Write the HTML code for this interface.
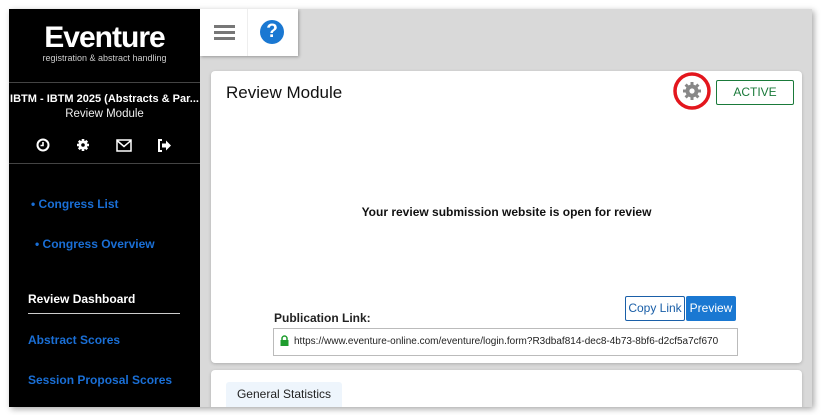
<!DOCTYPE html>
<html><head><meta charset="utf-8"><style>
*{margin:0;padding:0;box-sizing:border-box}
body{width:821px;height:415px;background:#fff;font-family:"Liberation Sans",sans-serif;position:relative;overflow:hidden}
#screen{position:absolute;left:9px;top:9px;width:803px;height:398px;background:#d9d9d9;box-shadow:2px 2px 6px rgba(0,0,0,.35);overflow:hidden}
#side{position:absolute;left:0;top:0;width:191px;height:398px;background:#000;color:#fff}
.abs{position:absolute}
.card{position:absolute;background:#fff;border-radius:4px;box-shadow:0 1px 3px rgba(0,0,0,.2)}
.link{color:#1a6fd6;font-weight:bold;font-size:12px}
</style></head><body>
<div id="screen">
 <div id="side">
  <div class="abs" style="left:0;width:191px;top:13px;text-align:center;font-size:30px;line-height:32px;font-weight:bold;letter-spacing:-1px">Eventure</div>
  <div class="abs" style="left:0;width:191px;top:44px;text-align:center;font-size:9px;color:#ccc">registration &amp; abstract handling</div>
  <div class="abs" style="left:0;top:73px;width:191px;height:1px;background:#444"></div>
  <div class="abs" style="left:0;width:191px;top:84px;text-align:center;font-size:11px;font-weight:bold;white-space:nowrap;overflow:hidden">IBTM - IBTM 2025 (Abstracts &amp; Par...</div>
  <div class="abs" style="left:0;width:191px;top:99px;text-align:center;font-size:11.5px;color:#eee">Review Module</div>
  <svg class="abs" style="left:27px;top:129px" width="14" height="14" viewBox="0 0 14 14"><circle cx="7" cy="7" r="5.5" fill="none" stroke="#fff" stroke-width="2"/><path d="M7 4v3.5H4.5" stroke="#fff" stroke-width="1.6" fill="none"/></svg>
  <svg class="abs" style="left:67px;top:129px" width="14" height="14" viewBox="0 0 14 14"><circle cx="7" cy="7" r="4.5" fill="#fff"/><g stroke="#fff" stroke-width="2.6"><path d="M7 1v12M1 7h12M2.8 2.8l8.4 8.4M11.2 2.8l-8.4 8.4"/></g><circle cx="7" cy="7" r="1.8" fill="#000"/></svg>
  <svg class="abs" style="left:107px;top:130px" width="16" height="13" viewBox="0 0 16 13"><rect x="1" y="1" width="14" height="11" fill="none" stroke="#fff" stroke-width="1.5"/><path d="M1 1.5l7 6 7-6" fill="none" stroke="#fff" stroke-width="1.5"/></svg>
  <svg class="abs" style="left:148px;top:130px" width="15" height="13" viewBox="0 0 15 13"><path d="M5 1H2v11h3" fill="none" stroke="#fff" stroke-width="2"/><path d="M5 4.5h4V1.5l5 5-5 5v-3H5z" fill="#fff"/></svg>
  <div class="abs" style="left:0;top:154px;width:191px;height:1px;background:#444"></div>
  <div class="abs link" style="left:22px;top:188px">• Congress List</div>
  <div class="abs link" style="left:26px;top:228px">• Congress Overview</div>
  <div class="abs" style="left:19px;top:283px;font-size:12px;font-weight:bold">Review Dashboard</div>
  <div class="abs" style="left:19px;top:304px;width:152px;height:1px;background:#ccc"></div>
  <div class="abs link" style="left:19px;top:324px">Abstract Scores</div>
  <div class="abs link" style="left:19px;top:364px">Session Proposal Scores</div>
 </div>
 <div class="abs" style="left:191px;top:0;width:98px;height:47px;background:#fff;box-shadow:1px 1px 3px rgba(0,0,0,.3)">
  <div class="abs" style="left:47px;top:0;width:1px;height:47px;background:#eee"></div>
  <div class="abs" style="left:14px;top:16px;width:21px;height:3px;background:#777;box-shadow:0 6px 0 #777,0 12px 0 #777"></div>
  <div class="abs" style="left:60px;top:11px;width:24px;height:24px;border-radius:50%;background:#1a78d2;color:#fff;font-weight:bold;font-size:19px;line-height:24px;text-align:center">?</div>
 </div>
 <div class="card" style="left:202px;top:62px;width:591px;height:292px">
  <div class="abs" style="left:15px;top:12px;font-size:17px;color:#111">Review Module</div>
  <svg class="abs" style="left:461px;top:0px" width="40" height="40" viewBox="0 0 40 40"><circle cx="20" cy="20" r="17" fill="none" stroke="#e3161d" stroke-width="3.5"/><g stroke="#888" stroke-width="3"><path d="M20 11v18M11 20h18M13.6 13.6l12.8 12.8M26.4 13.6L13.6 26.4"/></g><circle cx="20" cy="20" r="6.5" fill="#888"/><circle cx="20" cy="20" r="2.6" fill="#fff"/></svg>
  <div class="abs" style="left:505px;top:9px;width:78px;height:25px;border:1px solid #1a7a3a;border-radius:2px;color:#1a7a3a;font-size:12px;line-height:23px;text-align:center">ACTIVE</div>
  <div class="abs" style="left:0;width:591px;top:134px;text-align:center;font-size:12px;font-weight:bold;color:#111">Your review submission website is open for review</div>
  <div class="abs" style="left:414px;top:225px;width:60px;height:25px;border:1px solid #1a5fa8;border-radius:2px;color:#1a5fa8;font-size:12px;line-height:23px;text-align:center">Copy Link</div>
  <div class="abs" style="left:475px;top:225px;width:50px;height:25px;background:#1a78d2;border-radius:2px;color:#fff;font-size:12px;line-height:25px;text-align:center">Preview</div>
  <div class="abs" style="left:63px;top:240px;font-size:12px;font-weight:bold;color:#222">Publication Link:</div>
  <div class="abs" style="left:62px;top:257px;width:465px;height:28px;border:1px solid #bbb;font-size:10px;line-height:26px;color:#222;padding-left:20px;white-space:nowrap">https://www.eventure-online.com/eventure/login.form?R3dbaf814-dec8-4b73-8bf6-d2cf5a7cf670
   <svg class="abs" style="left:6px;top:6px" width="9" height="11" viewBox="0 0 9 11"><path d="M2 5V3.5a2.5 2.5 0 015 0V5" fill="none" stroke="#1f9d2e" stroke-width="1.5"/><rect x="0.5" y="5" width="8" height="6" fill="#1f9d2e"/></svg>
  </div>
 </div>
 <div class="card" style="left:202px;top:361px;width:591px;height:60px">
  <div class="abs" style="left:15px;top:12px;width:116px;height:30px;background:#eef5fc;border-radius:3px;font-size:12px;color:#222;line-height:25px;text-align:center">General Statistics</div>
 </div>
</div>
</body></html>
